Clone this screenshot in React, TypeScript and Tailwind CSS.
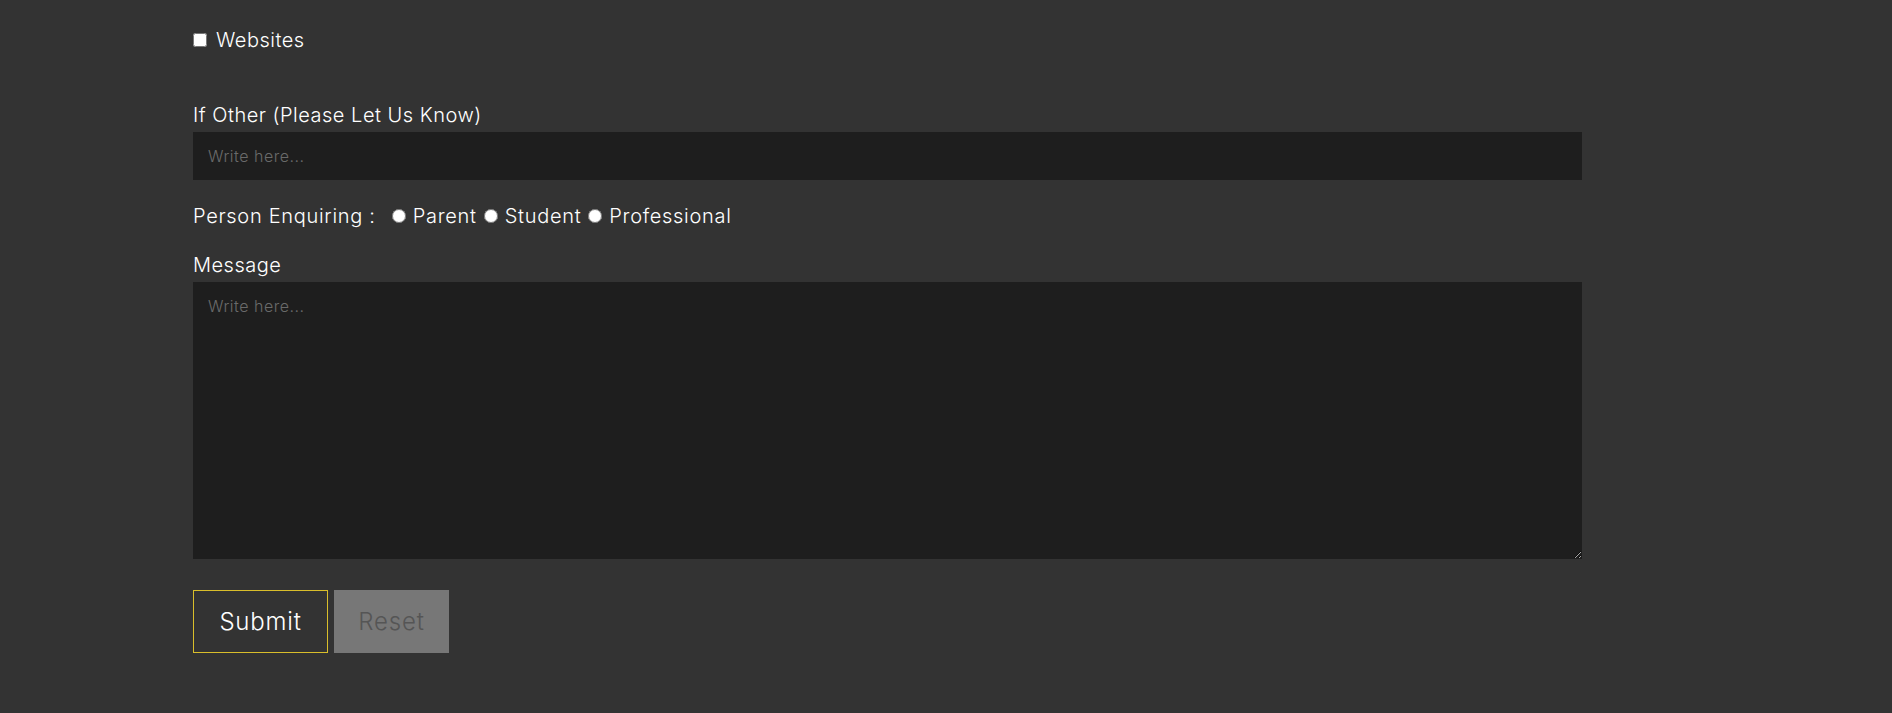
import React from "react";

const font = { fontFamily: 'Inter, "Open Sans", "Liberation Sans", sans-serif' };

export default function App() {
  return (
    <div
      className="min-h-[713px] w-full bg-[#333333] text-white font-light"
      style={font}
    >
      <form className="w-[1389px] ml-[193px] pt-[28px]" onSubmit={(e) => e.preventDefault()}>
        {/* Websites checkbox */}
        <label className="flex items-center h-[24px] text-[20px] tracking-[0.5px]">
          <input type="checkbox" className="w-[14px] h-[14px] m-0 mr-[9px]" />
          <span>Websites</span>
        </label>

        {/* If other */}
        <div className="mt-[51px] text-[20px] tracking-[0.5px] leading-[24px]">
          If Other (Please Let Us Know)
        </div>
        <input
          type="text"
          placeholder="Write here..."
          className="mt-[5px] block w-full h-[48px] bg-[#1e1e1e] px-[15px] text-[16px] tracking-[0.5px] text-white placeholder:text-[#6a6a6a] outline-none"
        />

        {/* Person enquiring */}
        <div className="mt-[24px] flex items-center h-[24px] text-[20px] tracking-[0.7px]">
          <span className="mr-[16px]">Person Enquiring :</span>
          <input type="radio" name="person" className="w-[14px] h-[14px] m-0 mr-[7px]" />
          <span className="mr-[7px]">Parent</span>
          <input type="radio" name="person" className="w-[14px] h-[14px] m-0 mr-[7px]" />
          <span className="mr-[7px]">Student</span>
          <input type="radio" name="person" className="w-[14px] h-[14px] m-0 mr-[7px]" />
          <span>Professional</span>
        </div>

        {/* Message */}
        <div className="mt-[25px] text-[20px] tracking-[0.5px] leading-[24px]">Message</div>
        <textarea
          placeholder="Write here..."
          className="mt-[5px] block w-full h-[277px] bg-[#1e1e1e] px-[15px] py-[12px] text-[16px] tracking-[0.5px] text-white placeholder:text-[#6a6a6a] outline-none"
        />

        {/* Buttons */}
        <div className="mt-[31px] flex gap-[6px]">
          <button
            type="submit"
            className="w-[135px] h-[63px] border border-[#d9be2b] text-[24px] tracking-[0.8px] text-white"
          >
            Submit
          </button>
          <button
            type="reset"
            className="w-[115px] h-[63px] bg-[#777777] text-[24px] tracking-[0.8px] text-[#555555]"
          >
            Reset
          </button>
        </div>
      </form>
    </div>
  );
}
